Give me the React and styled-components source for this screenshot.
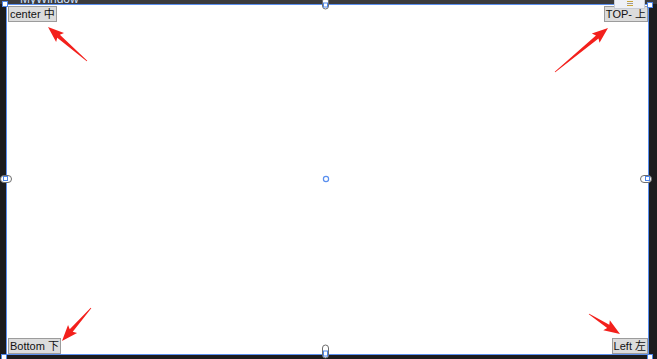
import React from "react";
import styled, { createGlobalStyle } from "styled-components";

const GlobalStyle = createGlobalStyle`
  html, body {
    margin: 0;
    padding: 0;
    background: #232325;
    overflow: hidden;
  }
`;

const arrows = [
  { from: [87, 61], to: [48, 27] },
  { from: [555, 72], to: [608, 28] },
  { from: [91, 308], to: [62, 341] },
  { from: [589, 314], to: [620, 334] },
];

// tapered arrow: thin tail, wider shaft near the head
const arrowPoints = ({ from, to }) => {
  const [tx, ty] = from;
  const [px, py] = to;
  const len = Math.hypot(px - tx, py - ty);
  const dx = (px - tx) / len;
  const dy = (py - ty) / len;
  const nx = -dy;
  const ny = dx;
  const headLen = 14;
  const headW = 12;
  const shaftW = 4;
  const bx = px - dx * headLen;
  const by = py - dy * headLen;
  const pts = [
    [tx + nx * 0.4, ty + ny * 0.4],
    [bx + (nx * shaftW) / 2, by + (ny * shaftW) / 2],
    [bx + (nx * headW) / 2 - dx * 2, by + (ny * headW) / 2 - dy * 2],
    [px, py],
    [bx - (nx * headW) / 2 - dx * 2, by - (ny * headW) / 2 - dy * 2],
    [bx - (nx * shaftW) / 2, by - (ny * shaftW) / 2],
    [tx - nx * 0.4, ty - ny * 0.4],
  ];
  return pts.map((p) => p.join(",")).join(" ");
};

export default function App() {
  return (
    <>
      <GlobalStyle />
      <Frame>
        <TitleBar>
          <Title>MyWindow</Title>
        </TitleBar>
        <Middle>
          <Canvas>
            <LabelRow>
              <Tag>center 中</Tag>
              <Tag>TOP- 上</Tag>
            </LabelRow>
            <LabelRow>
              <Tag>Bottom 下</Tag>
              <Tag>Left 左</Tag>
            </LabelRow>
          </Canvas>
        </Middle>
        <BottomStrip />

        <Popup>
          <svg width="6" height="6" viewBox="0 0 6 6">
            <rect x="0" y="0" width="6" height="1" fill="#c9a43a" />
            <rect x="0" y="2" width="6" height="1" fill="#9a9a9a" />
            <rect x="0" y="4" width="6" height="1" fill="#c9a43a" />
          </svg>
        </Popup>

        <Corner style={{ left: 2, top: 1 }} />
        <Corner style={{ left: 647, top: 2 }} />
        <Corner style={{ left: 1, top: 354 }} />
        <Corner style={{ left: 647, top: 354 }} />

        <Overlay width="657" height="359" viewBox="0 0 657 359">
          {arrows.map((a, i) => (
            <polygon key={i} points={arrowPoints(a)} fill="#f3201c" />
          ))}

          {/* center anchor */}
          <circle cx="326" cy="179" r="2.6" fill="none" stroke="#5a8fef" strokeWidth="1.2" />

          {/* top handle */}
          <rect x="322.5" y="-2" width="6" height="11" rx="3" fill="#fff" stroke="#6d6d6d" />
          <rect x="323.5" y="3" width="4" height="4" fill="#fff" stroke="#4f86e8" />

          {/* bottom handle */}
          <rect x="322.5" y="345" width="6" height="13" rx="3" fill="#fff" stroke="#6d6d6d" />
          <rect x="323.5" y="351" width="4" height="5" fill="#fff" stroke="#4f86e8" />

          {/* left handle */}
          <rect x="0.5" y="175.5" width="11" height="7" rx="3.5" fill="#fff" stroke="#6d6d6d" />
          <rect x="3.5" y="176.5" width="4" height="4" fill="#fff" stroke="#4f86e8" />

          {/* right handle */}
          <rect x="640.5" y="175.5" width="11" height="7" rx="3.5" fill="#fff" stroke="#6d6d6d" />
          <rect x="645.5" y="176.5" width="4" height="4" fill="#fff" stroke="#4f86e8" />
        </Overlay>
      </Frame>
    </>
  );
}

const Frame = styled.div`
  position: relative;
  width: 657px;
  height: 359px;
  display: flex;
  flex-direction: column;
  background: #232325;
  overflow: hidden;
`;

const TitleBar = styled.div`
  height: 5px;
  background: #3b3b3d;
  overflow: hidden;
  padding-left: 20px;
`;

const Title = styled.div`
  font-family: "Liberation Sans", sans-serif;
  font-size: 12px;
  line-height: 12px;
  color: #cfe0ff;
  margin-top: -7px;
`;

const Middle = styled.div`
  flex: 1;
  display: flex;
  padding-left: 6px;
  background: #1c1c1e;
`;

const Canvas = styled.div`
  width: 640px;
  height: 348px;
  background: #ffffff;
  border: 1px solid #5a8fef;
  display: flex;
  flex-direction: column;
  justify-content: space-between;
  padding: 1px 0 0 1px;
`;

const BottomStrip = styled.div`
  height: 4px;
  background: #1c1c1e;
`;

const LabelRow = styled.div`
  display: flex;
  justify-content: space-between;
  align-items: flex-end;
`;

const Tag = styled.div`
  font-family: "Liberation Sans", "Noto Sans CJK SC", sans-serif;
  font-size: 11px;
  line-height: 14px;
  height: 14px;
  padding: 0 1px 0 1px;
  color: #111;
  background: #dcdcdc;
  border: 1px solid #9c9c9c;
  white-space: pre;
`;

const Popup = styled.div`
  position: absolute;
  left: 614px;
  top: -1px;
  width: 29px;
  height: 8px;
  background: #eef0f6;
  border: 1px solid #c8ccd6;
  display: flex;
  align-items: center;
  justify-content: center;
`;

const Corner = styled.div`
  position: absolute;
  width: 4px;
  height: 4px;
  background: #ffffff;
  border: 1px solid #4f86e8;
`;

const Overlay = styled.svg`
  position: absolute;
  left: 0;
  top: 0;
  pointer-events: none;
`;
